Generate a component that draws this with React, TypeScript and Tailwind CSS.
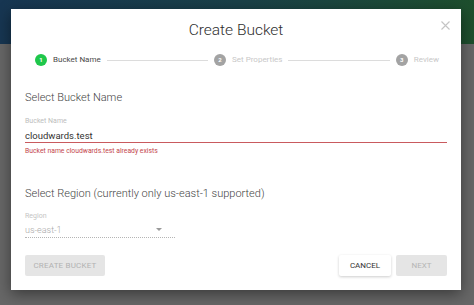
const Step = ({ n, label, active }: { n: number; label: string; active?: boolean }) => (
  <div className="flex items-center">
    <div
      className={`flex h-[12px] w-[12px] items-center justify-center rounded-full text-[6px] font-bold leading-none text-white ${
        active ? "bg-[#1fc74b]" : "bg-[#a3a3a3]"
      }`}
    >
      {n}
    </div>
    <span className={`ml-[6px] text-[8px] leading-[12px] ${active ? "text-[#4a4a4a]" : "text-[#c8c8c8]"}`}>
      {label}
    </span>
  </div>
)

const App = () => {
  return (
    <div className="relative h-[305px] w-[474px] overflow-hidden bg-[#676767] font-['Roboto',sans-serif]">
      <div className="h-[44px] w-full bg-gradient-to-r from-[#173652] via-[#1a4048] to-[#1e4f2d]" />

      <div className="absolute left-[11px] top-[9px] w-[450px] bg-white px-[14px] pb-[14px] shadow-[0_4px_14px_rgba(0,0,0,0.45)]">
        <button className="absolute right-[11px] top-[12px] text-[#c4c4c4]">
          <svg width="9" height="9" viewBox="0 0 9 9" fill="none" stroke="currentColor" strokeWidth="1.1">
            <path d="M0.5 0.5 L8.5 8.5 M8.5 0.5 L0.5 8.5" />
          </svg>
        </button>

        <h1 className="pt-[10px] text-center text-[15.5px] font-light leading-[22px] text-[#2e2e2e]">Create Bucket</h1>

        <div className="mt-[12px] flex h-[14px] items-center pl-[10px] pr-[8px]">
          <Step n={1} label="Bucket Name" active />
          <div className="mx-[6px] h-px flex-1 bg-[#dcdcdc]" />
          <Step n={2} label="Set Properties" />
          <div className="mx-[6px] h-px flex-1 bg-[#dcdcdc]" />
          <Step n={3} label="Review" />
        </div>

        <h2 className="mt-[23px] text-[11px] font-light leading-[16px] text-[#444]">Select Bucket Name</h2>
        <div className="mt-[11px] text-[7px] leading-[9px] text-[#bdbdbd]">Bucket Name</div>
        <div className="mt-[3px] h-[14px] border-b border-[#c95a5e] text-[9.5px] leading-[13px] text-[#333]">
          cloudwards.test
        </div>
        <div className="mt-[4px] text-[6.8px] leading-[9px] text-[#c4464c]">Bucket name cloudwards.test already exists</div>

        <h2 className="mt-[30px] text-[11px] font-light leading-[16px] text-[#444]">
          Select Region (currently only us-east-1 supported)
        </h2>
        <div className="mt-[10px] text-[7px] leading-[9px] text-[#c4c4c4]">Region</div>
        <div className="mt-[2px] flex h-[15px] w-[150px] items-center justify-between border-b border-dotted border-[#b5b5b5] pb-px">
          <span className="text-[9px] font-light leading-[14px] text-[#a8a8a8]">us-east-1</span>
          <div className="mr-[13px] h-0 w-0 border-x-[3px] border-t-[3px] border-x-transparent border-t-[#9a9a9a]" />
        </div>

        <div className="mt-[17px] flex items-center">
          <button className="h-[21px] w-[80px] rounded-[2px] bg-[#e5e5e5] text-[8px] tracking-[0.2px] text-[#b2b2b2]">
            CREATE BUCKET
          </button>
          <div className="flex-1" />
          <button className="h-[21px] w-[52px] rounded-[2px] bg-white text-[8px] text-[#333] shadow-[0_1px_3px_rgba(0,0,0,0.2)]">
            CANCEL
          </button>
          <button className="ml-[5px] h-[21px] w-[51px] rounded-[2px] bg-[#e5e5e5] text-[8px] text-[#b5b5b5]">NEXT</button>
        </div>
      </div>
    </div>
  )
}

export default App
